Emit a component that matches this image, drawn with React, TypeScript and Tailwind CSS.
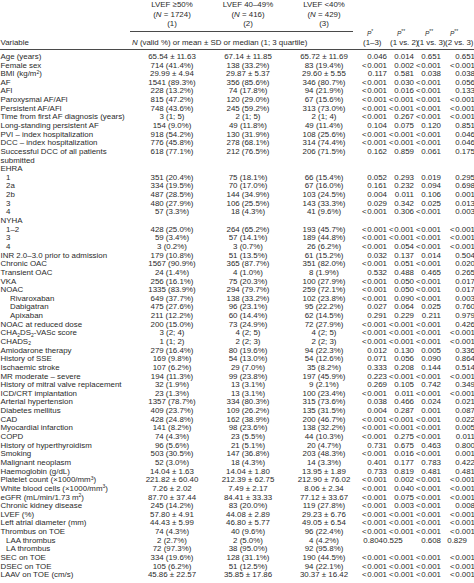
import React from 'react';

type Row = {
  label: React.ReactNode;
  indent?: 0 | 1 | 2;
  vals?: [string, string, string];
  p?: [string, string, string, string];
};

const L = '<\u200A0.001';
const ALL: [string, string, string, string] = [L, L, L, L];

const rows: Row[] = [
  { label: 'Age (years)', vals: ['65.54 ± 11.63', '67.14 ± 11.85', '65.72 ± 11.69'], p: ['0.046', '0.014', '0.651', '0.651'] },
  { label: 'Female sex', vals: ['714 (41.4%)', '138 (33.2%)', '83 (19.4%)'], p: [L, '0.002', L, L] },
  {
    label: (
      <>
        BMI (kg/m<sup className="text-[5px] leading-none">2</sup>)
      </>
    ),
    vals: ['29.99 ± 4.94', '29.87 ± 5.37', '29.60 ± 5.55'],
    p: ['0.117', '0.581', '0.038', '0.038'],
  },
  { label: 'AF', vals: ['1541 (89.3%)', '356 (85.6%)', '346 (80.7%)'], p: [L, '0.030', L, '0.056'] },
  { label: 'AFl', vals: ['228 (13.2%)', '74 (17.8%)', '94 (21.9%)'], p: [L, '0.016', L, '0.133'] },
  { label: 'Paroxysmal AF/AFl', vals: ['815 (47.2%)', '120 (29.0%)', '67 (15.6%)'], p: ALL },
  { label: 'Persistent AF/AFl', vals: ['748 (43.6%)', '245 (59.2%)', '313 (73.0%)'], p: ALL },
  { label: 'Time from first AF diagnosis (years)', vals: ['3 (1; 5)', '2 (1; 5)', '2 (1; 4)'], p: [L, '0.267', L, L] },
  { label: 'Long-standing persistent AF', vals: ['154 (9.0%)', '49 (11.8%)', '49 (11.4%)'], p: ['0.104', '0.075', '0.120', '0.851'] },
  { label: 'PVI – index hospitalization', vals: ['918 (54.2%)', '130 (31.9%)', '108 (25.6%)'], p: [L, L, L, '0.046'] },
  { label: 'DCC – index hospitalization', vals: ['776 (45.8%)', '278 (68.1%)', '314 (74.4%)'], p: [L, L, L, '0.046'] },
  { label: 'Successful DCC of all patients', vals: ['618 (77.1%)', '212 (76.5%)', '206 (71.5%)'], p: ['0.162', '0.859', '0.061', '0.175'] },
  { label: 'submitted' },
  { label: 'EHRA' },
  { label: '1', indent: 1, vals: ['351 (20.4%)', '75 (18.1%)', '66 (15.4%)'], p: ['0.052', '0.293', '0.019', '0.295'] },
  { label: '2a', indent: 1, vals: ['334 (19.5%)', '70 (17.0%)', '67 (16.0%)'], p: ['0.161', '0.232', '0.094', '0.698'] },
  { label: '2b', indent: 1, vals: ['487 (28.5%)', '144 (34.9%)', '103 (24.5%)'], p: ['0.004', '0.011', '0.106', '0.001'] },
  { label: '3', indent: 1, vals: ['480 (27.9%)', '106 (25.5%)', '143 (33.3%)'], p: ['0.029', '0.342', '0.025', '0.013'] },
  { label: '4', indent: 1, vals: ['57 (3.3%)', '18 (4.3%)', '41 (9.6%)'], p: [L, '0.306', L, '0.003'] },
  { label: 'NYHA' },
  { label: '1–2', indent: 1, vals: ['428 (25.0%)', '264 (65.2%)', '193 (45.7%)'], p: ALL },
  { label: '3', indent: 1, vals: ['59 (3.4%)', '57 (14.1%)', '189 (44.8%)'], p: ALL },
  { label: '4', indent: 1, vals: ['3 (0.2%)', '3 (0.7%)', '26 (6.2%)'], p: [L, '0.054', L, L] },
  { label: 'INR 2.0–3.0 prior to admission', vals: ['179 (10.8%)', '51 (13.5%)', '61 (15.2%)'], p: ['0.032', '0.137', '0.014', '0.504'] },
  { label: 'Chronic OAC', vals: ['1567 (90.9%)', '365 (87.7%)', '351 (82.0%)'], p: [L, '0.051', L, '0.020'] },
  { label: 'Transient OAC', vals: ['24 (1.4%)', '4 (1.0%)', '8 (1.9%)'], p: ['0.532', '0.488', '0.465', '0.265'] },
  { label: 'VKA', vals: ['256 (16.1%)', '75 (20.3%)', '100 (27.9%)'], p: [L, '0.050', L, '0.017'] },
  { label: 'NOAC', vals: ['1335 (83.9%)', '294 (79.7%)', '259 (72.1%)'], p: [L, '0.050', L, '0.017'] },
  { label: 'Rivaroxaban', indent: 2, vals: ['649 (37.7%)', '138 (33.2%)', '102 (23.8%)'], p: [L, '0.090', L, '0.003'] },
  { label: 'Dabigatran', indent: 2, vals: ['475 (27.6%)', '96 (23.1%)', '95 (22.2%)'], p: ['0.027', '0.064', '0.025', '0.760'] },
  { label: 'Apixaban', indent: 2, vals: ['211 (12.2%)', '60 (14.4%)', '62 (14.5%)'], p: ['0.291', '0.229', '0.211', '0.979'] },
  { label: 'NOAC at reduced dose', vals: ['200 (15.0%)', '73 (24.9%)', '72 (27.9%)'], p: [L, L, L, '0.426'] },
  {
    label: (
      <>
        CHA<sub className="text-[5px] leading-none">2</sub>DS<sub className="text-[5px] leading-none">2</sub>-VASc score
      </>
    ),
    vals: ['3 (2; 4)', '4 (2; 5)', '4 (2; 5)'],
    p: ALL,
  },
  {
    label: (
      <>
        CHADS<sub className="text-[5px] leading-none">2</sub>
      </>
    ),
    vals: ['1 (1; 2)', '2 (2; 3)', '2 (2; 3)'],
    p: ALL,
  },
  { label: 'Amiodarone therapy', vals: ['279 (16.4%)', '80 (19.6%)', '94 (22.3%)'], p: ['0.012', '0.130', '0.005', '0.336'] },
  { label: 'History of SSE', vals: ['169 (9.8%)', '54 (13.0%)', '54 (12.6%)'], p: ['0.071', '0.056', '0.090', '0.864'] },
  { label: 'Ischaemic stroke', vals: ['107 (6.2%)', '29 (7.0%)', '35 (8.2%)'], p: ['0.333', '0.208', '0.144', '0.514'] },
  { label: 'MR moderate – severe', vals: ['194 (11.3%)', '99 (23.8%)', '197 (45.9%)'], p: ['0.223', L, L, L] },
  { label: 'History of mitral valve replacement', vals: ['32 (1.9%)', '13 (3.1%)', '9 (2.1%)'], p: ['0.269', '0.105', '0.742', '0.349'] },
  { label: 'ICD/CRT implantation', vals: ['23 (1.3%)', '13 (3.1%)', '100 (23.4%)'], p: [L, '0.011', L, L] },
  { label: 'Arterial hypertension', vals: ['1357 (78.7%)', '334 (80.3%)', '315 (73.6%)'], p: ['0.038', '0.466', '0.024', '0.021'] },
  { label: 'Diabetes mellitus', vals: ['409 (23.7%)', '109 (26.2%)', '135 (31.5%)'], p: ['0.004', '0.287', '0.001', '0.087'] },
  { label: 'CAD', vals: ['428 (24.8%)', '162 (38.9%)', '200 (46.7%)'], p: [L, L, L, '0.022'] },
  { label: 'Myocardial infarction', vals: ['141 (8.2%)', '98 (23.6%)', '138 (32.2%)'], p: [L, L, L, '0.005'] },
  { label: 'COPD', vals: ['74 (4.3%)', '23 (5.5%)', '44 (10.3%)'], p: [L, '0.275', L, '0.011'] },
  { label: 'History of hyperthyroidism', vals: ['96 (5.6%)', '21 (5.1%)', '20 (4.7%)'], p: ['0.731', '0.675', '0.463', '0.800'] },
  { label: 'Smoking', vals: ['503 (30.5%)', '147 (36.8%)', '203 (48.3%)'], p: [L, '0.016', L, '0.001'] },
  { label: 'Malignant neoplasm', vals: ['52 (3.0%)', '18 (4.3%)', '14 (3.3%)'], p: ['0.401', '0.177', '0.783', '0.422'] },
  { label: 'Haemoglobin (g/dL)', vals: ['14.04 ± 1.63', '14.04 ± 1.80', '13.95 ± 1.89'], p: ['0.733', '0.819', '0.481', '0.481'] },
  {
    label: (
      <>
        Platelet count (×1000/mm<sup className="text-[5px] leading-none">3</sup>)
      </>
    ),
    vals: ['221.82 ± 60.40', '212.39 ± 62.75', '212.90 ± 76.02'],
    p: [L, '0.002', L, L],
  },
  {
    label: (
      <>
        White blood cells (×1000/mm<sup className="text-[5px] leading-none">3</sup>)
      </>
    ),
    vals: ['7.26 ± 2.02', '7.49 ± 2.17', '8.06 ± 2.34'],
    p: [L, '0.040', L, L],
  },
  {
    label: (
      <>
        eGFR (mL/min/1.73 m<sup className="text-[5px] leading-none">2</sup>)
      </>
    ),
    vals: ['87.70 ± 37.44', '84.41 ± 33.33', '77.12 ± 33.67'],
    p: [L, '0.075', L, L],
  },
  { label: 'Chronic kidney disease', vals: ['245 (14.2%)', '83 (20.0%)', '119 (27.8%)'], p: [L, '0.003', L, '0.008'] },
  { label: 'LVEF (%)', vals: ['57.80 ± 4.91', '44.08 ± 2.89', '29.23 ± 6.76'], p: ALL },
  { label: 'Left atrial diameter (mm)', vals: ['44.43 ± 5.99', '46.80 ± 5.77', '49.05 ± 6.54'], p: ALL },
  { label: 'Thrombus on TOE', vals: ['74 (4.3%)', '40 (9.6%)', '96 (22.4%)'], p: ALL },
  { label: 'LAA thrombus', indent: 1, vals: ['2 (2.7%)', '2 (5.0%)', '4 (4.2%)'], p: ['0.804', '0.525', '0.608', '0.829'] },
  { label: 'LA thrombus', indent: 1, vals: ['72 (97.3%)', '38 (95.0%)', '92 (95.8%)'] },
  { label: 'SEC on TOE', vals: ['334 (19.6%)', '128 (31.1%)', '190 (44.5%)'], p: ALL },
  { label: 'DSEC on TOE', vals: ['105 (6.2%)', '51 (12.5%)', '94 (22.1%)'], p: ALL },
  { label: 'LAAV on TOE (cm/s)', vals: ['45.86 ± 22.57', '35.85 ± 17.86', '30.37 ± 16.42'], p: ALL },
];

const indentClass = ['pl-[0.5px]', 'pl-[6px]', 'pl-[10px]'];

const PLabel = ({ stars }: { stars: string }) => (
  <span className="italic text-[6.5px]">
    P<sup className="text-[5px] not-italic leading-none">{stars}</sup>
  </span>
);

const TableRow = ({ row }: { row: Row }) => {
  // the LAA row has its two first p values run together in the source
  const special = row.label === 'LAA thrombus';
  return (
    <div className="flex h-[8.65px] items-center whitespace-nowrap leading-none">
      <div className={`w-[134px] shrink-0 ${indentClass[row.indent ?? 0]}`}>{row.label}</div>
      <div className="w-[76px] shrink-0 text-center">{row.vals?.[0]}</div>
      <div className="w-[76px] shrink-0 text-center">{row.vals?.[1]}</div>
      <div className="w-[76px] shrink-0 text-center">{row.vals?.[2]}</div>
      <div className={`w-[25px] shrink-0 text-right ${special ? 'pr-[4px]' : ''}`}>{row.p?.[0]}</div>
      <div className={`w-[27px] shrink-0 ${special ? 'text-left -ml-[4px]' : 'text-right'}`}>{row.p?.[1]}</div>
      <div className={`w-[27px] shrink-0 text-right ${special ? 'ml-[4px]' : ''}`}>{row.p?.[2]}</div>
      <div className={`w-[34px] shrink-0 text-right ${special ? '-ml-[4px] pr-[4px]' : ''}`}>{row.p?.[3]}</div>
    </div>
  );
};

const groups = [
  { top: <>LVEF ≥50%</>, n: '1724', k: '(1)' },
  { top: <>LVEF 40–49%</>, n: '416', k: '(2)' },
  { top: <>LVEF &lt;40%</>, n: '429', k: '(3)' },
];

const pHead = [
  { w: 'w-[25px]', star: '*', sub: '(1–3)', pl: 'pl-[5px]', subPl: 'pl-[1px]' },
  { w: 'w-[27px]', star: '**', sub: '(1 vs. 2)', pl: 'pl-[10px]', subPl: 'pl-[3px]' },
  { w: 'w-[27px]', star: '**', sub: '(1 vs. 3)', pl: 'pl-[11px]', subPl: 'pl-[3px]' },
  { w: 'w-[34px]', star: '**', sub: '(2 vs. 3)', pl: 'pl-[9px]', subPl: 'pl-[4px]' },
];

export default function App() {
  return (
    <div
      className="w-[474px] h-[583px] overflow-hidden bg-white text-[7.9px] text-[#2a2a2a]"
      style={{ fontFamily: '"Liberation Sans", Arial, sans-serif' }}
    >
      <div className="w-[476px]">
        {/* header */}
        <div className="flex h-[50px] border-b border-[#4a4a4a] whitespace-nowrap leading-none">
          <div className="w-[134px] shrink-0 flex flex-col justify-end pb-[1.5px] pl-[0.5px]">
            <div className="h-[9px] flex items-center">Variable</div>
          </div>
          <div className="w-[228px] shrink-0 flex flex-col pt-[0.25px]">
            <div className="flex">
              {groups.map((g) => (
                <div key={g.n} className="w-[76px] flex flex-col items-center">
                  <div className="h-[9.5px] flex items-center">{g.top}</div>
                  <div className="h-[9.5px] flex items-center">
                    (<span className="italic">N</span>&nbsp;=&nbsp;{g.n})
                  </div>
                  <div className="h-[9.5px] flex items-center">{g.k}</div>
                </div>
              ))}
            </div>
            <div className="mt-[2px] h-px bg-[#4a4a4a] -ml-[4px] mr-[9px]" />
            <div className="flex-1" />
            <div className="h-[9px] mb-[1.5px] flex items-center -ml-[2px]">
              <span className="italic">N</span>&nbsp;(valid %) or mean ± SD or median (1; 3 quartile)
            </div>
          </div>
          {pHead.map((h, i) => (
            <div key={i} className={`${h.w} shrink-0 flex flex-col justify-end pb-[1.5px]`}>
              <div className={`h-[9px] flex items-center ${h.pl}`}>
                <PLabel stars={h.star} />
              </div>
              <div className={`h-[9px] flex items-center ${h.subPl}`}>{h.sub}</div>
            </div>
          ))}
        </div>
        {/* body */}
        <div className="pt-[2.5px]">
          {rows.map((r, i) => (
            <TableRow key={i} row={r} />
          ))}
        </div>
      </div>
    </div>
  );
}
